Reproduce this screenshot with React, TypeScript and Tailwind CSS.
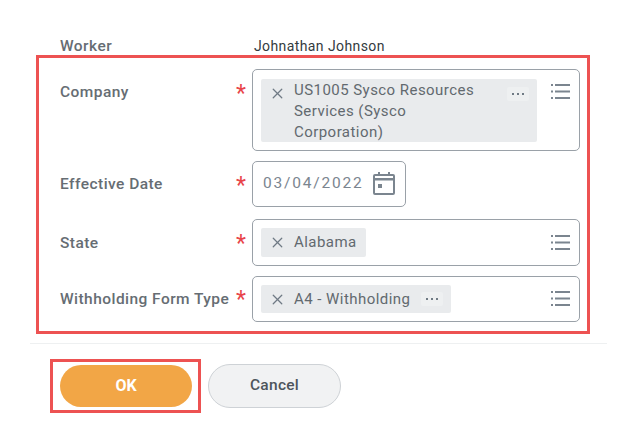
import { X } from "lucide-react";

function ListIcon() {
    return (
        <svg width="20" height="16" viewBox="0 0 20 16" className="text-[#7b858f]">
            <rect x="0" y="0" width="2" height="2" fill="currentColor" />
            <rect x="4" y="0" width="15" height="2" fill="currentColor" />
            <rect x="0" y="6.5" width="2" height="2" fill="currentColor" />
            <rect x="4" y="6.5" width="15" height="2" fill="currentColor" />
            <rect x="0" y="13" width="2" height="2" fill="currentColor" />
            <rect x="4" y="13" width="15" height="2" fill="currentColor" />
        </svg>
    );
}

function CalendarIcon() {
    return (
        <svg width="22" height="23" viewBox="0 0 22 23" className="text-[#7b858f]">
            <rect x="5" y="0" width="2" height="4" fill="currentColor" />
            <rect x="15" y="0" width="2" height="4" fill="currentColor" />
            <rect x="1" y="3" width="20" height="19" rx="1" fill="none" stroke="currentColor" strokeWidth="2" />
            <rect x="1" y="6" width="20" height="2.5" fill="currentColor" />
            <rect x="5" y="12" width="4" height="4" fill="currentColor" />
        </svg>
    );
}

function Dots() {
    return (
        <span className="flex h-[14px] w-[22px] items-center justify-center gap-[3px] rounded-[2px] bg-[#eef0f1]">
            <i className="h-[2px] w-[2px] bg-[#6f7a84]" />
            <i className="h-[2px] w-[2px] bg-[#6f7a84]" />
            <i className="h-[2px] w-[2px] bg-[#6f7a84]" />
        </span>
    );
}

function Row({ label, className, labelClass, starClass, children }: { label: string; className: string; labelClass?: string; starClass?: string; children: React.ReactNode }) {
    return (
        <div className={`flex ${className}`}>
            <div className={`w-[176px] shrink-0 text-[15.5px] leading-[20px] tracking-[0.45px] font-medium text-[#666d73] ${labelClass ?? ""}`}>{label}</div>
            <div className={`w-[16px] shrink-0 text-[23px] leading-[23px] text-[#e8444a] ${starClass ?? ""}`}>*</div>
            {children}
        </div>
    );
}

export default function App() {
    return (
        <div className="h-[438px] w-[634px] overflow-hidden bg-white font-['Roboto',sans-serif]">
            <div className="flex h-[55px] pl-[60px] pt-[37px] leading-[18px]">
                <div className="w-[194px] text-[15.5px] tracking-[0.45px] font-medium text-[#666d73]">Worker</div>
                <div className="text-[14px] tracking-[0.4px] text-[#333a40]">Johnathan Johnson</div>
            </div>

            {/* Form fields */}
            <div className="ml-[36px] h-[279px] w-[554px] border-[3px] border-[#ed5252] pl-[21px] pt-[11px]">
                <Row label="Company" className="items-start" labelClass="pt-[13px]" starClass="pt-[13px]">
                    <div className="flex h-[82px] w-[328px] justify-between rounded-[5px] border border-[#9aa1a8] pl-[8px] pr-[8px] pt-[9px]">
                        <div className="flex h-[63px] w-[276px] rounded-[2px] bg-[#e9ebed] pl-[8px] pr-[8px] pt-[1px]">
                            <X size={17} strokeWidth={1.75} className="mt-[5px] shrink-0 text-[#6f7a84]" />
                            <div className="ml-[8px] w-[190px] text-[15px] leading-[21px] tracking-[0.45px] text-[#62696f]">
                                US1005 Sysco Resources Services (Sysco Corporation)
                            </div>
                            <div className="ml-auto mt-[7px]"><Dots /></div>
                        </div>
                        <div className="pt-[5px]"><ListIcon /></div>
                    </div>
                </Row>

                <Row label="Effective Date" className="mt-[10px] items-center" starClass="pt-[2px]">
                    <div className="flex h-[46px] w-[154px] items-center rounded-[5px] border border-[#9aa1a8] pl-[10px]">
                        <span className="whitespace-nowrap text-[15.5px] tracking-[1.8px] text-[#7b858f]">03/04/2022</span>
                        <span className="ml-[10px] -mt-[2px]"><CalendarIcon /></span>
                    </div>
                </Row>

                <Row label="State" className="mt-[12px] items-center" starClass="pt-[2px]">
                    <div className="flex h-[47px] w-[328px] items-center justify-between rounded-[5px] border border-[#9aa1a8] pl-[8px] pr-[8px]">
                        <div className="flex h-[29px] w-[105px] items-center rounded-[2px] bg-[#e9ebed] pl-[8px]">
                            <X size={17} strokeWidth={1.75} className="shrink-0 text-[#6f7a84]" />
                            <span className="ml-[8px] text-[15px] tracking-[0.45px] text-[#62696f]">Alabama</span>
                        </div>
                        <ListIcon />
                    </div>
                </Row>

                <Row label="Withholding Form Type" className="mt-[10px] items-center" starClass="pt-[1px]">
                    <div className="flex h-[46px] w-[328px] items-center justify-between rounded-[5px] border border-[#9aa1a8] pl-[8px] pr-[8px]">
                        <div className="flex h-[28px] w-[190px] items-center rounded-[2px] bg-[#e9ebed] pl-[8px]">
                            <X size={17} strokeWidth={1.75} className="shrink-0 text-[#6f7a84]" />
                            <span className="ml-[8px] whitespace-nowrap text-[15px] tracking-[0.45px] text-[#62696f]">A4 - Withholding</span>
                            <div className="ml-[11px]"><Dots /></div>
                        </div>
                        <ListIcon />
                    </div>
                </Row>
            </div>

            <div className="ml-[30px] mt-[9px] h-px w-[577px] bg-[#eef0f1]" />

            <div className="ml-[50px] mt-[15px] flex items-center gap-[7px]">
                <div className="border-[3px] border-[#ed5252] pl-[7px] pr-[6px] py-[3px]">
                    <button className="block h-[42px] w-[132px] rounded-full bg-[#f2a646] text-[16px] font-bold text-white">OK</button>
                </div>
                <button className="h-[44px] w-[133px] rounded-full border border-[#ced2d6] bg-[#f1f2f3] text-[15.5px] tracking-[0.3px] font-medium text-[#4d555c]">Cancel</button>
            </div>
        </div>
    );
}
